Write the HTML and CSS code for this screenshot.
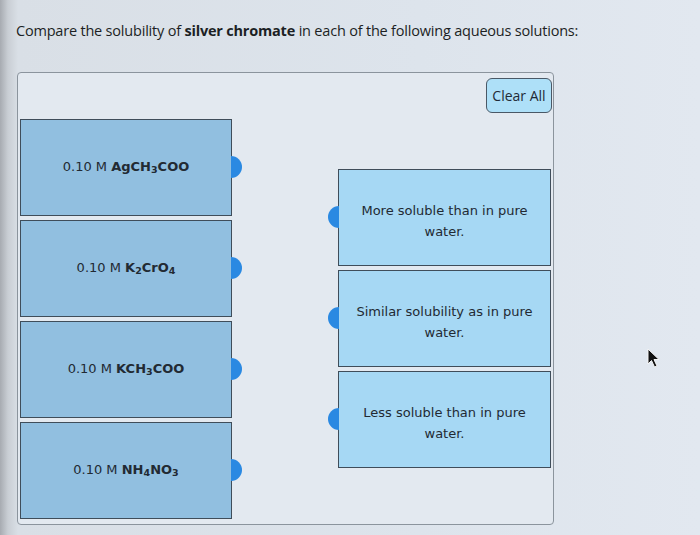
FILE: index.html
```html
<!DOCTYPE html>
<html lang="en">
<head>
    <meta charset="UTF-8" />
    <title>Solubility matching</title>
    <link rel="stylesheet" href="styles.css">
</head>
<body>
    <p class="question">Compare the solubility of <strong>silver chromate</strong> in each of the following aqueous solutions:</p>

    <div class="board">
        <div class="toolbar">
            <button class="btn-clear">Clear All</button>
        </div>
        <div class="columns">
            <div class="col col-left">
                <div class="item item-source"><span class="label">0.10 M <b>AgCH<sub>3</sub>COO</b></span><span class="handle handle-right"></span></div>
                <div class="item item-source"><span class="label">0.10 M <b>K<sub>2</sub>CrO<sub>4</sub></b></span><span class="handle handle-right"></span></div>
                <div class="item item-source"><span class="label">0.10 M <b>KCH<sub>3</sub>COO</b></span><span class="handle handle-right"></span></div>
                <div class="item item-source"><span class="label">0.10 M <b>NH<sub>4</sub>NO<sub>3</sub></b></span><span class="handle handle-right"></span></div>
            </div>
            <div class="col col-right">
                <div class="item item-target"><span class="handle handle-left"></span><span class="label">More soluble than in pure<br>water.</span></div>
                <div class="item item-target"><span class="handle handle-left"></span><span class="label">Similar solubility as in pure<br>water.</span></div>
                <div class="item item-target"><span class="handle handle-left"></span><span class="label">Less soluble than in pure<br>water.</span></div>
            </div>
        </div>
    </div>

    <!-- mouse pointer -->
    <svg class="pointer" width="14" height="20" viewBox="0 0 14 20">
        <path d="M1 1 L1 16 L4.5 12.5 L7.5 19 L10 18 L7 11.5 L12 11.5 Z" fill="#111" stroke="#f4f4f4" stroke-width="1"/>
    </svg>
</body>
</html>
```

FILE: styles.css
```css
body {
    margin: 0;
    width: 700px;
    height: 535px;
    overflow: hidden;
    position: relative;
    font-family: "Open Sans", sans-serif;
    color: #1c1f24;
    background: linear-gradient(90deg, #a7abb1 0px, #c9ced4 8px, #d9dfe6 18px, #dde4ec 60%, #e2e8f0 100%);
}
.question { margin: 0; padding: 21px 0 0 16px; font-size: 14.5px; line-height: 20px; letter-spacing: -0.2px; }
.question strong { font-weight: 700; }

.board {
    margin: 31px 0 0 17px;
    width: 535px;
    height: 451px;
    border: 1px solid #8b949d;
    border-radius: 4px;
    background: #e3e9f0;
}
.toolbar { display: flex; justify-content: flex-end; padding: 5px 1px 0 0; }
.btn-clear {
    width: 66px;
    height: 35px;
    padding: 0;
    font-family: "Open Sans", sans-serif;
    font-size: 14px;
    color: #1f2a36;
    background: #aee0f8;
    border: 1px solid #4a5866;
    border-radius: 6px;
}

.columns { display: flex; justify-content: space-between; padding: 6px 2px 0 2px; }
.col { display: flex; flex-direction: column; gap: 4px; }
.col-left { width: 212px; }
.col-right { width: 213px; margin-top: 50px; }

.item {
    position: relative;
    height: 97px;
    box-sizing: border-box;
    display: flex;
    align-items: center;
    justify-content: center;
    text-align: center;
    font-family: "DejaVu Sans", sans-serif;
    font-size: 13px;
    color: #222a33;
    border: 1px solid #3f4d5a;
}
.item-source { background: #91bfe0; padding-bottom: 2px; }
.item-target { background: #a6d8f4; line-height: 21px; padding-top: 6px; }
.item b { font-weight: 700; }
.item sub { font-size: 9.5px; vertical-align: -2px; line-height: 0; }

.handle {
    position: absolute;
    top: 50%;
    width: 11px;
    height: 22px;
    margin-top: -12px;
    background: #2a89e2;
}
.handle-right { left: 100%; border-radius: 0 11px 11px 0; }
.handle-left { right: 100%; border-radius: 11px 0 0 11px; }

.pointer { position: absolute; left: 647px; top: 348px; }
```
